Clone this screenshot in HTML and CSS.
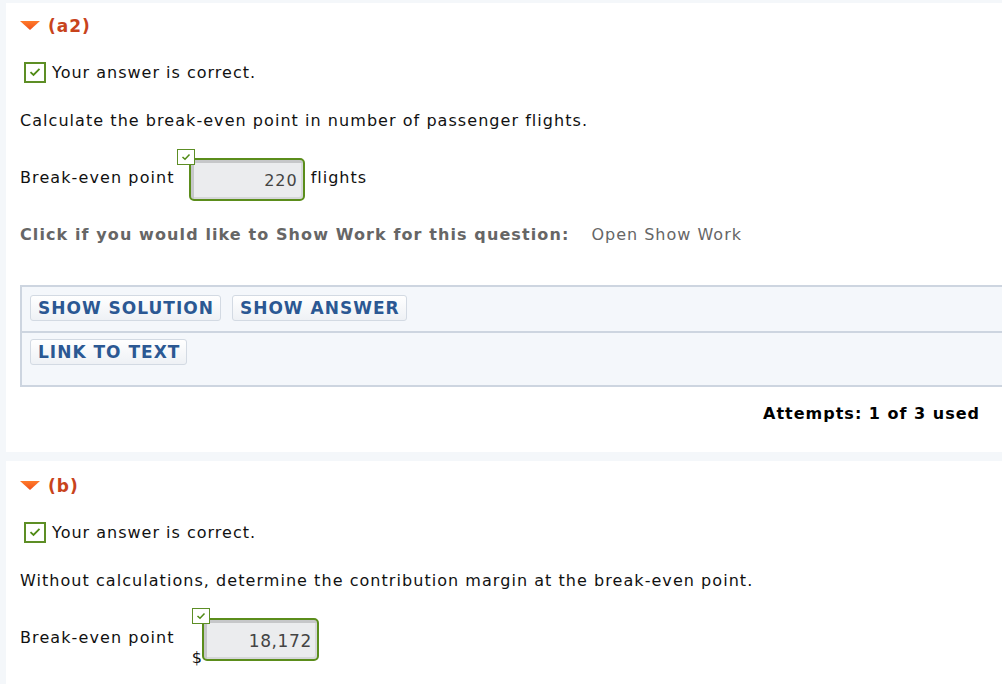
FILE: index.html
```html
<!DOCTYPE html>
<html>
<head>
<meta charset="utf-8">
<link rel="stylesheet" href="styles.css">
</head>
<body>
<div class="panel panel-a">
  <div class="part-head">
    <svg class="tri" width="20" height="9" viewBox="0 0 20 9"><defs><linearGradient id="g1" x1="0" y1="0" x2="0" y2="1"><stop offset="0" stop-color="#ff7a2a"/><stop offset="1" stop-color="#f0501a"/></linearGradient></defs><polygon points="0,0 20,0 10,9" fill="url(#g1)"/></svg>
    <span class="part-title">(a2)</span>
  </div>
  <div class="correct">
    <span class="cbox"><svg width="12" height="10" viewBox="0 0 12 10"><path d="M1.5 5.2 L4.5 8 L10.5 1.8" fill="none" stroke="#4f8a14" stroke-width="1.8"/></svg></span>
    <span>Your answer is correct.</span>
  </div>
  <p class="question">Calculate the break-even point in number of passenger flights.</p>
  <div class="answer-row">
    <span class="label">Break-even point</span>
    <span class="field">
      <span class="badge badge-a"><svg width="10" height="8" viewBox="0 0 10 8"><path d="M1.5 4 L4 6.3 L8.5 1.5" fill="none" stroke="#4f8a14" stroke-width="1.5"/></svg></span>
      <span class="input w-a">220</span>
    </span>
    <span class="unit">flights</span>
  </div>
  <div class="showwork">
    <span class="sw-label">Click if you would like to Show Work for this question:</span>
    <span class="sw-link">Open Show Work</span>
  </div>
  <div class="solbox">
    <div class="solrow first">
      <span class="btn">SHOW SOLUTION</span>
      <span class="btn">SHOW ANSWER</span>
    </div>
    <div class="solrow last">
      <span class="btn">LINK TO TEXT</span>
    </div>
  </div>
  <div class="attempts">Attempts: 1 of 3 used</div>
</div>
<div class="panel panel-b">
  <div class="part-head">
    <svg class="tri" width="20" height="9" viewBox="0 0 20 9"><defs><linearGradient id="g2" x1="0" y1="0" x2="0" y2="1"><stop offset="0" stop-color="#ff7a2a"/><stop offset="1" stop-color="#f0501a"/></linearGradient></defs><polygon points="0,0 20,0 10,9" fill="url(#g2)"/></svg>
    <span class="part-title">(b)</span>
  </div>
  <div class="correct">
    <span class="cbox"><svg width="12" height="10" viewBox="0 0 12 10"><path d="M1.5 5.2 L4.5 8 L10.5 1.8" fill="none" stroke="#4f8a14" stroke-width="1.8"/></svg></span>
    <span>Your answer is correct.</span>
  </div>
  <p class="question">Without calculations, determine the contribution margin at the break-even point.</p>
  <div class="answer-row dollar-row">
    <span class="label">Break-even point</span>
    <span class="dollar">$</span>
    <span class="field">
      <span class="badge badge-b"><svg width="10" height="8" viewBox="0 0 10 8"><path d="M1.5 4 L4 6.3 L8.5 1.5" fill="none" stroke="#4f8a14" stroke-width="1.5"/></svg></span>
      <span class="input w-b">18,172</span>
    </span>
  </div>
</div>
</body>
</html>
```
FILE: styles.css
```css
html, body {
  margin: 0;
  padding: 0;
}
body {
  background: #f4f7fa;
  padding: 3px 0 0 6px;
  font-family: "DejaVu Sans", Verdana, sans-serif;
  font-size: 16px;
  letter-spacing: 1px;
  color: #111;
  width: 1002px;
  height: 684px;
  box-sizing: border-box;
  overflow: hidden;
}
.panel {
  background: #fff;
  padding-left: 14px;
}
.panel-a {
  height: 449px;
  margin-bottom: 9px;
}
.panel-b {
  height: 230px;
  padding-top: 2px;
}
.part-head {
  display: flex;
  align-items: center;
  height: 20px;
  padding-top: 13px;
}
.tri {
  display: block;
  margin-right: 8px;
  margin-top: -1px;
}
.part-title {
  font-weight: bold;
  font-size: 17px;
  letter-spacing: 1px;
  color: #c8431c;
}
.correct {
  display: flex;
  align-items: center;
  margin-top: 25px;
  margin-left: 4px;
  height: 22px;
}
.cbox {
  box-sizing: border-box;
  width: 22px;
  height: 21px;
  border: 2px solid #5d8e25;
  display: flex;
  align-items: center;
  justify-content: center;
  margin-right: 6px;
  background: #fff;
}
.question {
  margin: 28px 0 0 0;
  line-height: 20px;
  letter-spacing: 1.05px;
}
.answer-row {
  display: flex;
  align-items: center;
  margin-top: 27px;
  height: 43px;
}
.label {
  margin-right: 14px;
  padding-bottom: 5px;
  letter-spacing: 1.1px;
}
.field {
  position: relative;
  display: block;
}
.badge {
  position: absolute;
  box-sizing: border-box;
  width: 18px;
  height: 16px;
  border: 1px solid #5d8e25;
  background: #fff;
  display: flex;
  align-items: center;
  justify-content: center;
  z-index: 2;
}
.badge-a {
  left: -12px;
  top: -9px;
}
.badge-b {
  left: -10px;
  top: -10px;
}
.input {
  box-sizing: border-box;
  display: block;
  height: 43px;
  border: 2px solid #5b8d1b;
  border-radius: 5px;
  background: #ebecee;
  box-shadow: inset 2px 2px 0 1px #c6c7c9, inset -1px -1px 0 1px #d6d7d9;
  text-align: right;
  padding: 11px 5px 0 0;
  color: #444;
  line-height: 20px;
}
.w-a {
  width: 116px;
}
.w-b {
  width: 117px;
  font-size: 17px;
  letter-spacing: 0.6px;
}
.unit {
  margin-left: 6px;
  padding-bottom: 5px;
}
.showwork {
  margin-top: 24px;
  color: #666;
  display: flex;
  line-height: 20px;
}
.sw-label {
  font-weight: bold;
  margin-right: 22px;
  letter-spacing: 1.1px;
}
.solbox {
  margin-top: 40px;
  border: 2px solid #cdd5e0;
  border-right: none;
  background: #f4f7fb;
  height: 102px;
  box-sizing: border-box;
}
.solrow {
  display: flex;
  gap: 11px;
  padding: 8px 0 10px 8px;
}
.solrow.first {
  border-bottom: 2px solid #cdd5e0;
}
.solrow.last {
  padding-top: 6px;
}
.btn {
  display: block;
  box-sizing: border-box;
  height: 26px;
  line-height: 24px;
  padding: 0 6px 0 7px;
  border: 1px solid #d3dae3;
  border-radius: 3px;
  background: linear-gradient(#ffffff, #eef1f5);
  color: #2b5893;
  font-weight: bold;
  font-size: 17px;
  letter-spacing: 1px;
}
.attempts {
  text-align: right;
  font-weight: bold;
  margin-top: 17px;
  padding-right: 22px;
  color: #000;
  line-height: 20px;
}
.dollar-row .label {
  margin-right: 17px;
}
.dollar {
  align-self: flex-end;
  margin-bottom: -6px;
  margin-right: 0;
  letter-spacing: 0;
}
```
